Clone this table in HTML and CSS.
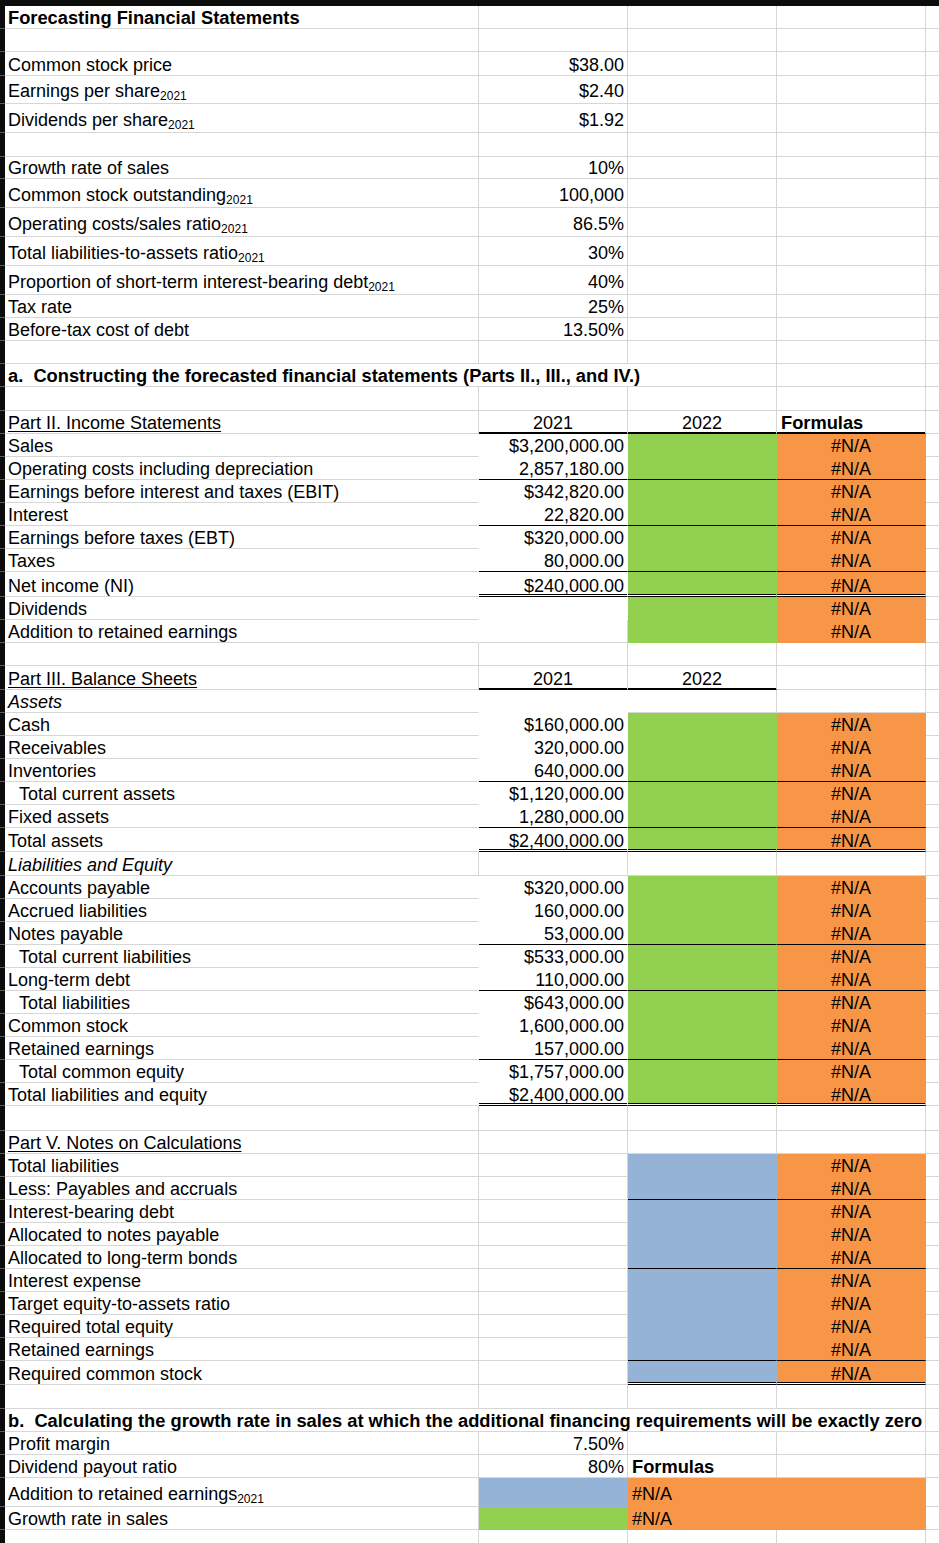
FILE: index.html
```html
<!DOCTYPE html>
<html lang="en">
<head>
<meta charset="utf-8">
<title>Forecasting Financial Statements</title>
<link rel="stylesheet" href="styles.css">
</head>
<body>
<div class="sheet">
  <div class="top"></div>

  <div class="row"><div class="rh"></div><div class="a bold">Forecasting Financial Statements</div><div class="b"></div><div class="c"></div><div class="d"></div><div class="e"></div></div>
  <div class="row"><div class="rh"></div><div class="a"></div><div class="b"></div><div class="c"></div><div class="d"></div><div class="e"></div></div>
  <div class="row h24"><div class="rh"></div><div class="a">Common stock price</div><div class="b num">$38.00</div><div class="c"></div><div class="d"></div><div class="e"></div></div>
  <div class="row h28 pb"><div class="rh"></div><div class="a"><span>Earnings per share<span class="sub">2021</span></span></div><div class="b num">$2.40</div><div class="c"></div><div class="d"></div><div class="e"></div></div>
  <div class="row h29 pb"><div class="rh"></div><div class="a"><span>Dividends per share<span class="sub">2021</span></span></div><div class="b num">$1.92</div><div class="c"></div><div class="d"></div><div class="e"></div></div>
  <div class="row h24"><div class="rh"></div><div class="a"></div><div class="b"></div><div class="c"></div><div class="d"></div><div class="e"></div></div>
  <div class="row h22"><div class="rh"></div><div class="a">Growth rate of sales</div><div class="b num">10%</div><div class="c"></div><div class="d"></div><div class="e"></div></div>
  <div class="row h29 pb"><div class="rh"></div><div class="a"><span>Common stock outstanding<span class="sub">2021</span></span></div><div class="b num">100,000</div><div class="c"></div><div class="d"></div><div class="e"></div></div>
  <div class="row h29 pb"><div class="rh"></div><div class="a"><span>Operating costs/sales ratio<span class="sub">2021</span></span></div><div class="b num">86.5%</div><div class="c"></div><div class="d"></div><div class="e"></div></div>
  <div class="row h29 pb"><div class="rh"></div><div class="a"><span>Total liabilities-to-assets ratio<span class="sub">2021</span></span></div><div class="b num">30%</div><div class="c"></div><div class="d"></div><div class="e"></div></div>
  <div class="row h29 pb"><div class="rh"></div><div class="a"><span>Proportion of short-term interest-bearing debt<span class="sub">2021</span></span></div><div class="b num">40%</div><div class="c"></div><div class="d"></div><div class="e"></div></div>
  <div class="row"><div class="rh"></div><div class="a">Tax rate</div><div class="b num">25%</div><div class="c"></div><div class="d"></div><div class="e"></div></div>
  <div class="row"><div class="rh"></div><div class="a">Before-tax cost of debt</div><div class="b num">13.50%</div><div class="c"></div><div class="d"></div><div class="e"></div></div>
  <div class="row"><div class="rh"></div><div class="a"></div><div class="b"></div><div class="c"></div><div class="d"></div><div class="e"></div></div>
  <div class="row"><div class="rh"></div><div class="sac bold">a.&nbsp; Constructing the forecasted financial statements (Parts II., III., and IV.)</div><div class="d"></div><div class="e"></div></div>
  <div class="row h24"><div class="rh"></div><div class="a"></div><div class="b"></div><div class="c"></div><div class="d"></div><div class="e"></div></div>

  <!-- Part II -->
  <div class="row"><div class="rh"></div><div class="a"><span class="u">Part II. Income Statements</span></div><div class="b ctr thk">2021</div><div class="c ctr thk">2022</div><div class="d lft bold thk">Formulas</div><div class="e"></div></div>
  <div class="row tbl"><div class="rh"></div><div class="a">Sales</div><div class="b num w">$3,200,000.00</div><div class="c g"></div><div class="d o ctr">#N/A</div><div class="e"></div></div>
  <div class="row tbl"><div class="rh"></div><div class="a">Operating costs including depreciation</div><div class="b num w bl">2,857,180.00</div><div class="c g bl"></div><div class="d o ctr bl">#N/A</div><div class="e"></div></div>
  <div class="row tbl"><div class="rh"></div><div class="a">Earnings before interest and taxes (EBIT)</div><div class="b num w">$342,820.00</div><div class="c g"></div><div class="d o ctr">#N/A</div><div class="e"></div></div>
  <div class="row tbl"><div class="rh"></div><div class="a">Interest</div><div class="b num w bl">22,820.00</div><div class="c g bl"></div><div class="d o ctr bl">#N/A</div><div class="e"></div></div>
  <div class="row tbl"><div class="rh"></div><div class="a">Earnings before taxes (EBT)</div><div class="b num w">$320,000.00</div><div class="c g"></div><div class="d o ctr">#N/A</div><div class="e"></div></div>
  <div class="row tbl"><div class="rh"></div><div class="a">Taxes</div><div class="b num w bl">80,000.00</div><div class="c g bl"></div><div class="d o ctr bl">#N/A</div><div class="e"></div></div>
  <div class="row tbl h25"><div class="rh"></div><div class="a">Net income (NI)</div><div class="b num w dbl">$240,000.00</div><div class="c g dbl"></div><div class="d o ctr dbl">#N/A</div><div class="e"></div></div>
  <div class="row tbl"><div class="rh"></div><div class="a">Dividends</div><div class="b w"></div><div class="c g"></div><div class="d o ctr">#N/A</div><div class="e"></div></div>
  <div class="row tbl"><div class="rh"></div><div class="a">Addition to retained earnings</div><div class="b"></div><div class="c g"></div><div class="d o ctr">#N/A</div><div class="e"></div></div>
  <div class="row"><div class="rh"></div><div class="a"></div><div class="b"></div><div class="c"></div><div class="d"></div><div class="e"></div></div>

  <!-- Part III -->
  <div class="row h24"><div class="rh"></div><div class="a"><span class="u">Part III. Balance Sheets</span></div><div class="b ctr thk">2021</div><div class="c ctr thk">2022</div><div class="d"></div><div class="e"></div></div>
  <div class="row tbl"><div class="rh"></div><div class="a it">Assets</div><div class="b w"></div><div class="c"></div><div class="d"></div><div class="e"></div></div>
  <div class="row tbl"><div class="rh"></div><div class="a">Cash</div><div class="b num w">$160,000.00</div><div class="c g"></div><div class="d o ctr">#N/A</div><div class="e"></div></div>
  <div class="row tbl"><div class="rh"></div><div class="a">Receivables</div><div class="b num w">320,000.00</div><div class="c g"></div><div class="d o ctr">#N/A</div><div class="e"></div></div>
  <div class="row tbl"><div class="rh"></div><div class="a">Inventories</div><div class="b num w bl">640,000.00</div><div class="c g bl"></div><div class="d o ctr bl">#N/A</div><div class="e"></div></div>
  <div class="row tbl"><div class="rh"></div><div class="a ind">Total current assets</div><div class="b num w">$1,120,000.00</div><div class="c g"></div><div class="d o ctr">#N/A</div><div class="e"></div></div>
  <div class="row tbl"><div class="rh"></div><div class="a">Fixed assets</div><div class="b num w bl">1,280,000.00</div><div class="c g bl"></div><div class="d o ctr bl">#N/A</div><div class="e"></div></div>
  <div class="row tbl h24"><div class="rh"></div><div class="a">Total assets</div><div class="b num w dbl">$2,400,000.00</div><div class="c g dbl"></div><div class="d o ctr dbl">#N/A</div><div class="e"></div></div>
  <div class="row h24"><div class="rh"></div><div class="a it">Liabilities and Equity</div><div class="b"></div><div class="c"></div><div class="d"></div><div class="e"></div></div>
  <div class="row tbl"><div class="rh"></div><div class="a">Accounts payable</div><div class="b num w">$320,000.00</div><div class="c g"></div><div class="d o ctr">#N/A</div><div class="e"></div></div>
  <div class="row tbl"><div class="rh"></div><div class="a">Accrued liabilities</div><div class="b num w">160,000.00</div><div class="c g"></div><div class="d o ctr">#N/A</div><div class="e"></div></div>
  <div class="row tbl"><div class="rh"></div><div class="a">Notes payable</div><div class="b num w bl">53,000.00</div><div class="c g bl"></div><div class="d o ctr bl">#N/A</div><div class="e"></div></div>
  <div class="row tbl"><div class="rh"></div><div class="a ind">Total current liabilities</div><div class="b num w">$533,000.00</div><div class="c g"></div><div class="d o ctr">#N/A</div><div class="e"></div></div>
  <div class="row tbl"><div class="rh"></div><div class="a">Long-term debt</div><div class="b num w bl">110,000.00</div><div class="c g bl"></div><div class="d o ctr bl">#N/A</div><div class="e"></div></div>
  <div class="row tbl"><div class="rh"></div><div class="a ind">Total liabilities</div><div class="b num w">$643,000.00</div><div class="c g"></div><div class="d o ctr">#N/A</div><div class="e"></div></div>
  <div class="row tbl"><div class="rh"></div><div class="a">Common stock</div><div class="b num w">1,600,000.00</div><div class="c g"></div><div class="d o ctr">#N/A</div><div class="e"></div></div>
  <div class="row tbl"><div class="rh"></div><div class="a">Retained earnings</div><div class="b num w bl">157,000.00</div><div class="c g bl"></div><div class="d o ctr bl">#N/A</div><div class="e"></div></div>
  <div class="row tbl"><div class="rh"></div><div class="a ind">Total common equity</div><div class="b num w">$1,757,000.00</div><div class="c g"></div><div class="d o ctr">#N/A</div><div class="e"></div></div>
  <div class="row tbl"><div class="rh"></div><div class="a">Total liabilities and equity</div><div class="b num w dbl">$2,400,000.00</div><div class="c g dbl"></div><div class="d o ctr dbl">#N/A</div><div class="e"></div></div>
  <div class="row h25"><div class="rh"></div><div class="a"></div><div class="b"></div><div class="c"></div><div class="d"></div><div class="e"></div></div>

  <!-- Part V -->
  <div class="row"><div class="rh"></div><div class="a"><span class="u">Part V. Notes on Calculations</span></div><div class="b"></div><div class="c"></div><div class="d"></div><div class="e"></div></div>
  <div class="row"><div class="rh"></div><div class="a">Total liabilities</div><div class="b"></div><div class="c bu"></div><div class="d o ctr">#N/A</div><div class="e"></div></div>
  <div class="row"><div class="rh"></div><div class="a">Less: Payables and accruals</div><div class="b"></div><div class="c bu bl"></div><div class="d o ctr bl">#N/A</div><div class="e"></div></div>
  <div class="row"><div class="rh"></div><div class="a">Interest-bearing debt</div><div class="b"></div><div class="c bu"></div><div class="d o ctr">#N/A</div><div class="e"></div></div>
  <div class="row"><div class="rh"></div><div class="a">Allocated to notes payable</div><div class="b"></div><div class="c bu"></div><div class="d o ctr">#N/A</div><div class="e"></div></div>
  <div class="row"><div class="rh"></div><div class="a">Allocated to long-term bonds</div><div class="b"></div><div class="c bu bl"></div><div class="d o ctr bl">#N/A</div><div class="e"></div></div>
  <div class="row"><div class="rh"></div><div class="a">Interest expense</div><div class="b"></div><div class="c bu"></div><div class="d o ctr">#N/A</div><div class="e"></div></div>
  <div class="row"><div class="rh"></div><div class="a">Target equity-to-assets ratio</div><div class="b"></div><div class="c bu"></div><div class="d o ctr">#N/A</div><div class="e"></div></div>
  <div class="row"><div class="rh"></div><div class="a">Required total equity</div><div class="b"></div><div class="c bu"></div><div class="d o ctr">#N/A</div><div class="e"></div></div>
  <div class="row"><div class="rh"></div><div class="a">Retained earnings</div><div class="b"></div><div class="c bu bl"></div><div class="d o ctr bl">#N/A</div><div class="e"></div></div>
  <div class="row h24"><div class="rh"></div><div class="a">Required common stock</div><div class="b"></div><div class="c bu dbl"></div><div class="d o ctr dbl">#N/A</div><div class="e"></div></div>
  <div class="row h24"><div class="rh"></div><div class="a"></div><div class="b"></div><div class="c"></div><div class="d"></div><div class="e"></div></div>

  <!-- b. -->
  <div class="row"><div class="rh"></div><div class="sad bold">b.&nbsp; Calculating the growth rate in sales at which the additional financing requirements will be exactly zero</div><div class="e"></div></div>
  <div class="row"><div class="rh"></div><div class="a">Profit margin</div><div class="b num">7.50%</div><div class="c"></div><div class="d"></div><div class="e"></div></div>
  <div class="row"><div class="rh"></div><div class="a">Dividend payout ratio</div><div class="b num">80%</div><div class="c lft bold">Formulas</div><div class="d"></div><div class="e"></div></div>
  <div class="row h29 pb"><div class="rh"></div><div class="a"><span>Addition to retained earnings<span class="sub">2021</span></span></div><div class="b bu"></div><div class="scd o lft">#N/A</div><div class="e"></div></div>
  <div class="row"><div class="rh"></div><div class="a">Growth rate in sales</div><div class="b g"></div><div class="scd o lft">#N/A</div><div class="e"></div></div>
  <div class="row"><div class="rh"></div><div class="a"></div><div class="b"></div><div class="c"></div><div class="d"></div><div class="e"></div></div>
</div>
</body>
</html>
```

FILE: styles.css
```css
html, body {
  margin: 0;
  padding: 0;
  background: #ffffff;
}

body {
  font-family: "Liberation Sans", Arial, sans-serif;
  font-size: 18px;
  color: #000000;
}

.sheet {
  width: 939px;
  overflow: hidden;
}

.top {
  height: 6px;
  background: #0c0c0c;
}

.row {
  display: flex;
  height: 23px;
}

.h22 { height: 22px; }
.h24 { height: 24px; }
.h25 { height: 25px; }
.h28 { height: 28px; }
.h29 { height: 29px; }

.row > div {
  flex: none;
  box-sizing: border-box;
  display: flex;
  align-items: flex-end;
  line-height: 20px;
  white-space: nowrap;
  border-bottom: 1px solid #d6d6d6;
  border-right: 1px solid #d6d6d6;
}

.pb > div {
  padding-bottom: 2px;
}

.row > .rh {
  width: 5px;
  background: #0c0c0c;
  border-right: none;
  border-bottom-color: #5a5a5a;
}

.row > .a {
  width: 474px;
  padding-left: 3px;
}

.row > .b,
.row > .c,
.row > .d {
  width: 149px;
}

.row > .sac {
  width: 772px;
  padding-left: 3px;
}

.row > .sad {
  width: 921px;
  padding-left: 3px;
}

.row > .scd {
  width: 298px;
}

.row > .e {
  flex: 1 1 auto;
  border-right: none;
}

.row > .num {
  justify-content: flex-end;
  padding-right: 3px;
}

.row > .ctr {
  justify-content: center;
}

.row > .lft {
  justify-content: flex-start;
  padding-left: 4px;
}

.row > .ind {
  padding-left: 14px;
}

.bold {
  font-weight: bold;
  font-size: 18.3px;
}

.it { font-style: italic; }
.u { text-decoration: underline; text-underline-offset: 2px; }

.sub {
  font-size: 12px;
  line-height: 0;
  vertical-align: -3px;
}

/* table rows: no gridline between label and white-filled value column */
.tbl > .a {
  border-right-color: #ffffff;
}

/* fills */
.row > .w {
  background: #ffffff;
  border-bottom-color: #ffffff;
  border-right-color: #ffffff;
}

.row > .g {
  background: #92d050;
  border-bottom-color: #92d050;
  border-right-color: #92d050;
}

.row > .o {
  background: #f79646;
  border-bottom-color: #f79646;
  border-right-color: #f79646;
}

.row > .bu {
  background: #95b3d7;
  border-bottom-color: #95b3d7;
  border-right-color: #95b3d7;
}

/* black borders */
.row > .bl {
  border-bottom-color: #000000;
}

.row > .thk {
  border-bottom-color: #000000;
  box-shadow: inset 0 -1px 0 #000000;
}

.row > .dbl {
  border-bottom-color: #000000;
  box-shadow: inset 0 -1px 0 #ffffff, inset 0 -2px 0 #000000;
}
```
